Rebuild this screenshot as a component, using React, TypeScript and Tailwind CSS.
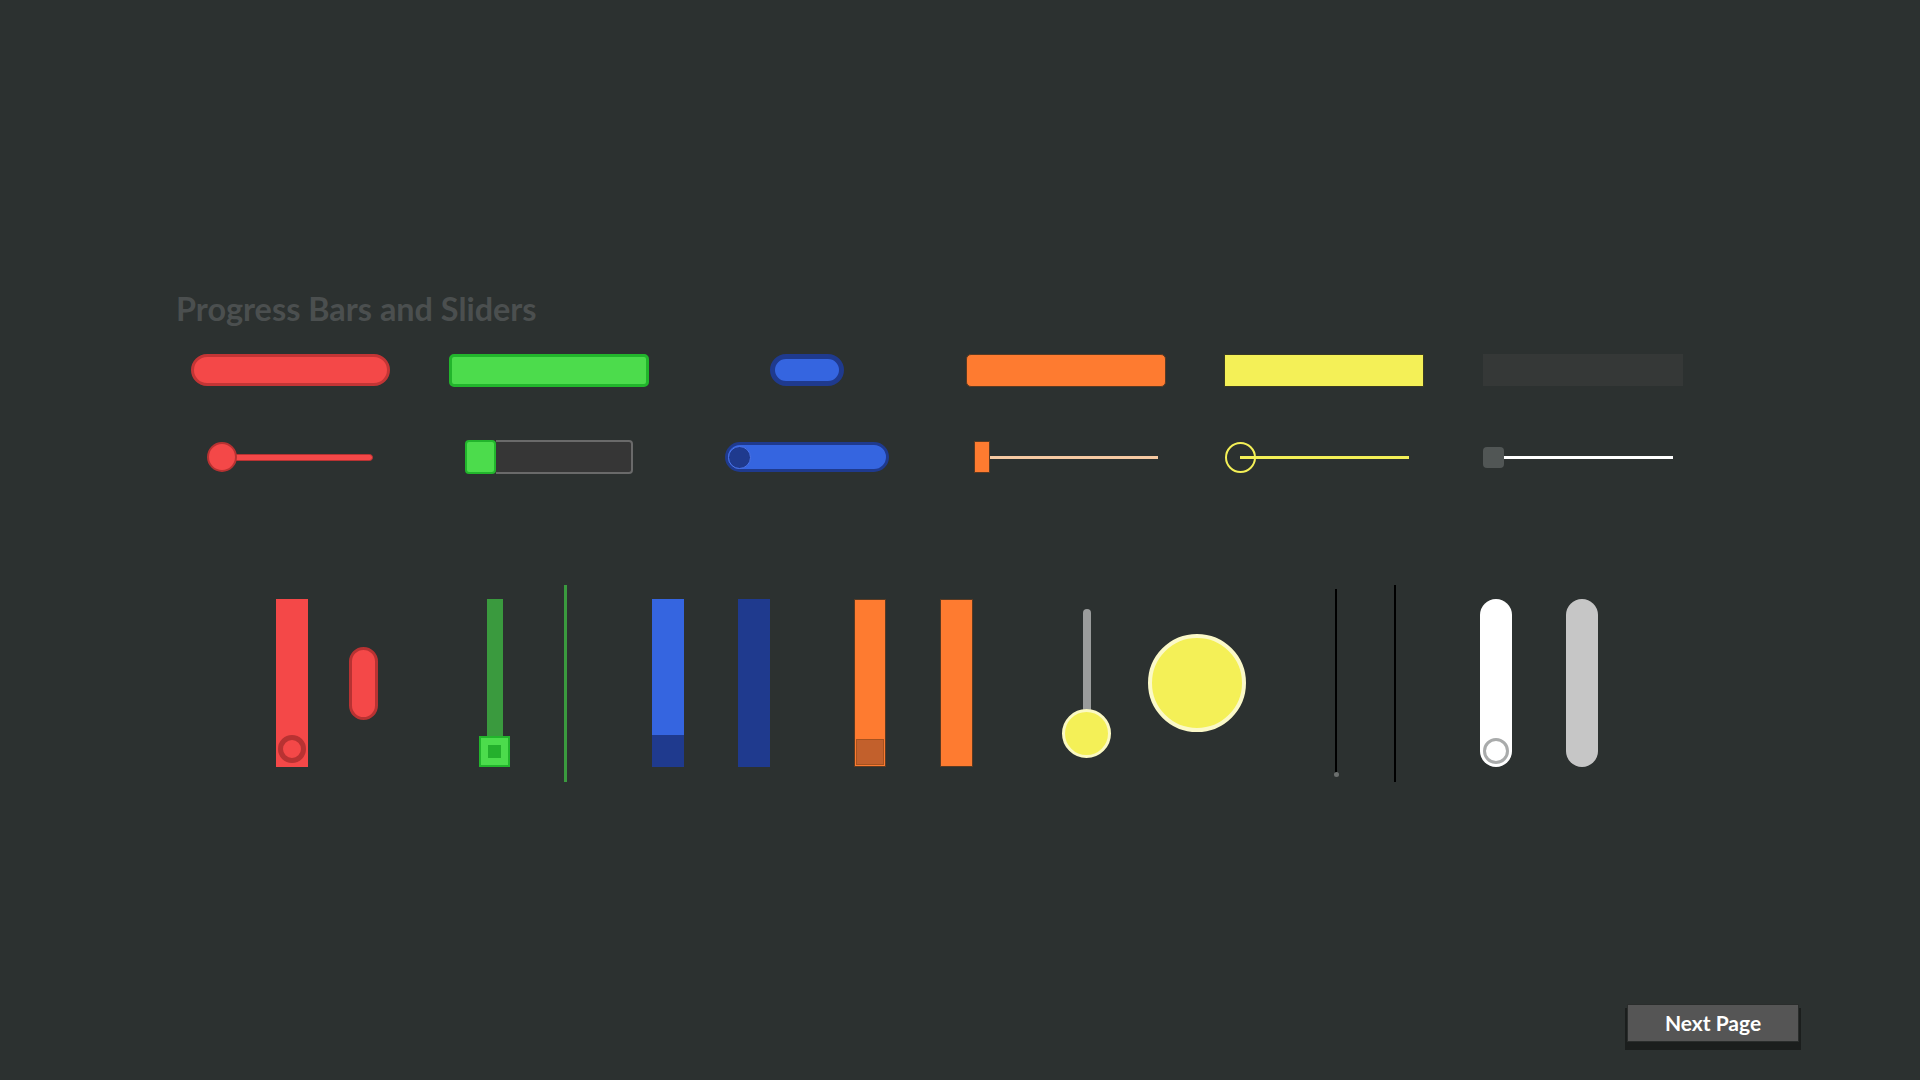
import React from 'react'

const font = { fontFamily: 'Lato, "Open Sans", "Liberation Sans", sans-serif' }

function TopBars() {
  return (
    <div className="ml-[14px] grid grid-cols-[repeat(6,200px)] gap-x-[58.6px] gap-y-[53px]">
      {/* row 1: progress bars */}
      <div className="flex h-[34px] items-center justify-center">
        <div className="h-[32px] w-[199px] rounded-full border-[3px] border-[#c33535] bg-[#f44848]" />
      </div>
      <div className="flex h-[34px] items-center justify-center">
        <div className="h-[33px] w-[200px] rounded-[5px] border-[3px] border-[#22b52c] bg-[#4cdc4c]" />
      </div>
      <div className="flex h-[34px] items-center justify-center">
        <div className="h-[32px] w-[74px] rounded-full border-[5px] border-[#1f3a8e] bg-[#3565e0]" />
      </div>
      <div className="flex h-[34px] items-center justify-center">
        <div className="h-[33px] w-[201px] rounded-[5px] border border-[#5b3a22] bg-[#fe7b30]" />
      </div>
      <div className="flex h-[34px] items-center justify-center">
        <div className="h-[33px] w-[200px] border border-[#3b3b22] bg-[#f4f057]" />
      </div>
      <div className="flex h-[34px] items-center justify-center">
        <div className="h-[32px] w-[200px] bg-[#353837]" />
      </div>

      {/* row 2: sliders */}
      <div className="flex h-[34px] items-center justify-center">
        <div className="flex w-[166px] items-center">
          <div className="relative z-10 h-[30px] w-[30px] shrink-0 rounded-full border-2 border-[#b83232] bg-[#f44848]" />
          <div className="-ml-[4px] h-[7px] flex-1 rounded-full border border-[#b83232] bg-[#f44848]" />
        </div>
      </div>
      <div className="flex h-[34px] items-center justify-center">
        <div className="flex h-[34px] w-[168px]">
          <div className="h-[34px] w-[31px] shrink-0 rounded-[4px] border-2 border-[#22b52c] bg-[#4cdc4c]" />
          <div className="h-[34px] flex-1 rounded-r-[4px] border-2 border-l-0 border-[#6a6a6a] bg-[#363636]" />
        </div>
      </div>
      <div className="flex h-[34px] items-center justify-center">
        <div className="flex h-[30px] w-[164px] items-center rounded-full border-[3px] border-[#1f3a8e] bg-[#3565e0]">
          <div className="h-[23px] w-[23px] rounded-full border border-[#4b74ea] bg-[#1f3a8e]" />
        </div>
      </div>
      <div className="flex h-[34px] items-center justify-center">
        <div className="flex w-[184px] items-center">
          <div className="h-[32px] w-[16px] shrink-0 border border-[#5b3a22] bg-[#fe7b30]" />
          <div className="h-[3px] flex-1 bg-[#f6c9a2]" />
        </div>
      </div>
      <div className="flex h-[34px] items-center justify-start pl-px">
        <div className="flex w-[184px] items-center">
          <div className="h-[31px] w-[31px] shrink-0 rounded-full border-2 border-[#f4f057]" />
          <div className="-ml-[16px] h-[3px] flex-1 bg-[#f4f057]" />
        </div>
      </div>
      <div className="flex h-[34px] items-center justify-start">
        <div className="flex w-[190px] items-center">
          <div className="h-[21px] w-[21px] shrink-0 rounded-[4px] bg-[#515655]" />
          <div className="h-[3px] flex-1 bg-white" />
        </div>
      </div>
    </div>
  )
}

function VerticalRow() {
  return (
    <div className="mt-[109px] flex h-[200px] items-center pl-[276px]">
      {/* red */}
      <div className="relative h-[168px] w-[32px] bg-[#f44848]">
        <div className="absolute bottom-[4px] left-[2px] h-[28px] w-[28px] rounded-full border-[5px] border-[#b83232]" />
      </div>
      <div className="ml-[41px] h-[73px] w-[29px] rounded-full border-[3px] border-[#b83232] bg-[#f44848]" />

      {/* green */}
      <div className="ml-[101px] flex h-[168px] w-[31px] flex-col items-center">
        <div className="w-[16px] flex-1 bg-[#3a9a3e]" />
        <div className="flex h-[31px] w-[31px] items-center justify-center border-2 border-[#22b52c] bg-[#4cdc4c]">
          <div className="h-[13px] w-[13px] bg-[#24b02c]" />
        </div>
      </div>
      <div className="ml-[54px] h-[197px] w-[3px] bg-[#3a9a3e]" />

      {/* blue */}
      <div className="ml-[85px] flex h-[168px] w-[32px] flex-col">
        <div className="flex-1 bg-[#3565e0]" />
        <div className="h-[32px] bg-[#1f3a8e]" />
      </div>
      <div className="ml-[54px] h-[168px] w-[32px] bg-[#1f3a8e]" />

      {/* orange */}
      <div className="ml-[84px] flex h-[168px] w-[32px] flex-col justify-end border border-[#5b3a22] bg-[#fe7b30] p-px">
        <div className="h-[26px] w-full border border-[#a6521f] bg-[#c2602c]" />
      </div>
      <div className="ml-[54px] h-[168px] w-[33px] border border-[#5b3a22] bg-[#fe7b30]" />

      {/* yellow */}
      <div className="ml-[89px] flex w-[49px] flex-col items-center">
        <div className="h-[124px] w-[8px] rounded-full bg-[#9a9c9c]" />
        <div className="-mt-[24px] h-[49px] w-[49px] rounded-full border-[3px] border-[#fbf9c2] bg-[#f4f057]" />
      </div>
      <div className="ml-[37px] h-[98px] w-[98px] rounded-full border-4 border-[#fbf9c8] bg-[#f4f057]" />

      {/* black */}
      <div className="ml-[87px] flex h-[188px] w-[6px] flex-col items-center">
        <div className="w-[2px] flex-1 bg-black" />
        <div className="mt-[-2px] h-[5px] w-[5px] rounded-full bg-[#6b6f6e]" />
      </div>
      <div className="ml-[55px] h-[197px] w-[2px] bg-black" />

      {/* white / gray */}
      <div className="relative ml-[84px] h-[168px] w-[32px] rounded-full bg-white">
        <div className="absolute bottom-[3px] left-[3px] h-[26px] w-[26px] rounded-full border-[3px] border-[#a9abab] bg-white" />
      </div>
      <div className="ml-[54px] h-[168px] w-[32px] rounded-full bg-[#c6c6c6]" />
    </div>
  )
}

export default function App() {
  return (
    <div className="flex min-h-screen flex-col bg-[#2c3130]" style={font}>
      <div className="pl-[176px] pt-[290px]">
        <h1 className="mb-[25px] text-[32.4px] leading-[38px] font-bold text-[#4b4f4f]">
          Progress Bars and Sliders
        </h1>
        <TopBars />
      </div>
      <VerticalRow />
      <div className="mt-auto flex justify-end pb-[38px] pr-[121px]">
        <button className="h-[38px] w-[172px] border border-[#2a2d2c] bg-[#555555] text-[21px] font-bold text-white shadow-[0_6px_0_2px_#1b1e1d]">
          Next Page
        </button>
      </div>
    </div>
  )
}
